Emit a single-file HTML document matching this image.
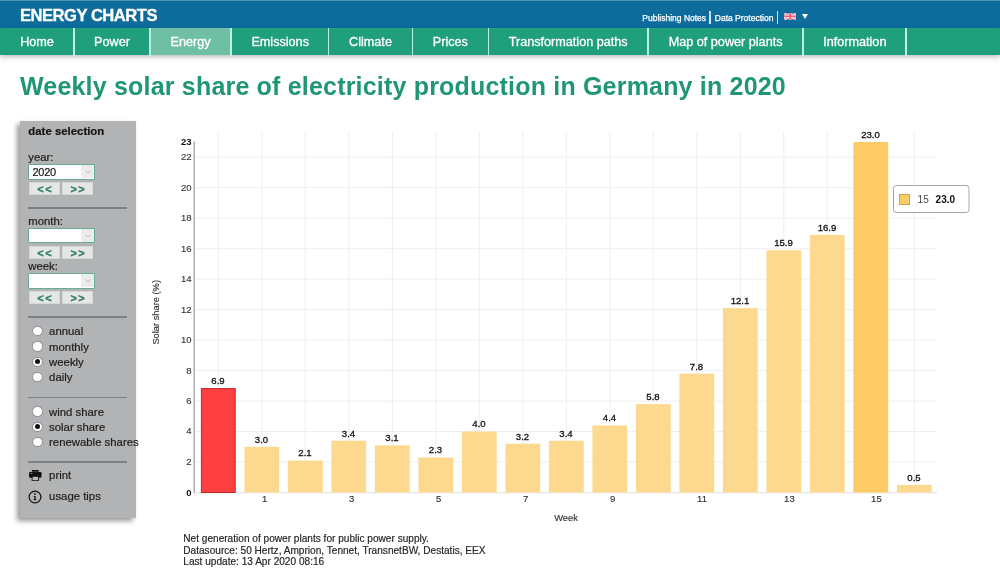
<!DOCTYPE html>
<html><head><meta charset="utf-8"><title>Energy Charts</title>
<style>
html,body{margin:0;padding:0;background:#fff;}
body{width:1000px;height:568px;position:relative;overflow:hidden;font-family:"Liberation Sans",Arial,sans-serif;color:#222;}
#wrap{position:absolute;left:0;top:0;width:1000px;height:568px;will-change:transform}
#top{position:absolute;left:0;top:0;width:1000px;height:28px;background:#0e6c9d;border-top:1px solid #4f95ba;box-sizing:border-box}
#logo{position:absolute;left:20px;top:4.6px;font-weight:bold;font-size:16.6px;color:#fff;-webkit-text-stroke:0.3px #fff;letter-spacing:-0.5px;line-height:20px;white-space:nowrap}
.lk{position:absolute;top:11.5px;font-size:8.5px;color:#fff;line-height:12px;white-space:nowrap;-webkit-text-stroke:0.25px #fff}
.ls{position:absolute;top:10.6px;width:1.5px;height:13.2px;background:#cbe2ee}
#nav{position:absolute;left:0;top:27.7px;width:1000px;height:27px;background:#1f9f7c;box-shadow:0 2px 5px rgba(0,0,0,0.27)}
.ni{position:absolute;top:0;width:200px;height:27px;line-height:29.3px;text-align:center;color:#fff;font-size:12.65px;white-space:nowrap;-webkit-text-stroke:0.3px #fff}
.act{position:absolute;top:0;height:27px;background:#6fbfa6}
.sep{position:absolute;top:0;width:1.5px;height:28px;background:#b8f3df}
h1{position:absolute;left:20px;top:70.5px;margin:0;font-size:25px;letter-spacing:0.19px;line-height:30px;font-weight:bold;color:#1f9775;white-space:nowrap}
#side{position:absolute;left:20px;top:120.5px;width:116px;height:397px;background:#b1b3b5;box-shadow:-3px 3px 5px rgba(0,0,0,0.4);font-size:11.35px;color:#1c1c1c;-webkit-text-stroke:0.2px #1c1c1c}
#side div,#side span{position:absolute;white-space:nowrap}
.hr{left:8px;width:99px;height:1.5px;background:#7e8083}
.sel{left:8.3px;width:67.2px;height:15.7px;background:#fff;border:1px solid #68ad97;border-radius:1px;box-sizing:border-box;font-size:11px;letter-spacing:-0.35px;line-height:14px;padding-left:3.3px;color:#111}
.dd{right:0;top:0;width:13.2px;height:13.2px;background:#ececec}
.btn{width:31px;height:13px;background:#e5e6e6;border:1px solid #d6d7d7;box-sizing:border-box;color:#2a9a79;font-size:11px;font-weight:bold;line-height:12.6px;text-align:center;letter-spacing:1.4px;text-indent:1.4px}
.rd{left:12.2px;width:10.4px;height:10.4px;border:1px solid #8b8d90;border-radius:50%;background:#fff;box-sizing:border-box}
.rd.on:after{content:"";position:absolute;left:1.7px;top:1.7px;width:5px;height:5px;border-radius:50%;background:#111}
.lb{left:29.1px;line-height:14px}
.lb.l0{left:8.3px;margin-top:-0.6px}
svg text{font-family:"Liberation Sans",Arial,sans-serif}
.g{stroke:#eee;stroke-width:1}
.v{font-size:9.6px;fill:#111;text-anchor:middle;stroke:#111;stroke-width:0.3}
.yl{font-size:9.5px;fill:#3a3a3a;text-anchor:end;stroke:#3a3a3a;stroke-width:0.15}
.xl{font-size:9.5px;fill:#333;text-anchor:middle;stroke:#333;stroke-width:0.15}
.tt{font-size:10px;fill:#444}
.b{font-weight:bold;fill:#111;stroke:none}
.ft{position:absolute;left:183.3px;font-size:10.1px;line-height:12px;color:#262626;white-space:nowrap;-webkit-text-stroke:0.18px #262626}
</style></head><body><div id="wrap">
<div id="top"><div id="logo">ENERGY CHARTS</div></div>
<div class="lk" style="left:642.3px">Publishing Notes</div><div class="ls" style="left:709px"></div>
<div class="lk" style="left:714.8px">Data Protection</div><div class="ls" style="left:776.5px"></div>
<svg style="position:absolute;left:784px;top:13.3px" width="12.2" height="6.8" viewBox="0 0 12.2 6.8"><rect width="12.2" height="6.8" fill="#3d4f8c"/><path d="M0 0L12.2 6.8M12.2 0L0 6.8" stroke="#f3e6ea" stroke-width="2.3"/><path d="M0 0L12.2 6.8M12.2 0L0 6.8" stroke="#ef8496" stroke-width="0.8"/><path d="M6.1 0V6.8M0 3.4H12.2" stroke="#f7eef0" stroke-width="3"/><path d="M6.1 0V6.8M0 3.4H12.2" stroke="#f0607a" stroke-width="1.7"/></svg>
<div style="position:absolute;left:802.3px;top:14.4px;width:0;height:0;border-left:3px solid transparent;border-right:3px solid transparent;border-top:5.2px solid #fff"></div>
<div id="nav"><div class="act" style="left:150.5px;width:80.5px"></div><div class="ni" style="left:-63.0px">Home</div><div class="ni" style="left:12.0px">Power</div><div class="ni" style="left:90.5px">Energy</div><div class="ni" style="left:180.2px">Emissions</div><div class="ni" style="left:270.5px">Climate</div><div class="ni" style="left:350.3px">Prices</div><div class="ni" style="left:468.2px">Transformation paths</div><div class="ni" style="left:625.6px">Map of power plants</div><div class="ni" style="left:754.8px">Information</div><div class="sep" style="left:73.25px"></div><div class="sep" style="left:149.25px"></div><div class="sep" style="left:230.25px"></div><div class="sep" style="left:327.95px"></div><div class="sep" style="left:411.95px"></div><div class="sep" style="left:487.85px"></div><div class="sep" style="left:647.25px"></div><div class="sep" style="left:802.15px"></div><div class="sep" style="left:905.45px"></div></div>
<h1>Weekly solar share of electricity production in Germany in 2020</h1>
<div id="side">
<div style="left:8.3px;top:3px;font-weight:bold;color:#111;font-size:11.4px;line-height:14px">date selection</div><div class="lb l0" style="top:29.9px">year:</div><div class="sel" style="top:43.5px">2020<span class="dd"></span><svg width="6" height="3.8" viewBox="0 0 6 3.8" style="position:absolute;right:3.4px;top:5.2px"><path d="M0.4 0.4L3 3.2L5.6 0.4" fill="none" stroke="#b9b9b9" stroke-width="1"/></svg></div><div class="btn" style="left:9px;top:61.5px">&lt;&lt;</div><div class="btn" style="left:42.2px;top:61.5px">&gt;&gt;</div><div class="hr" style="top:86.6px"></div><div class="lb l0" style="top:93.8px">month:</div><div class="sel" style="top:107.0px"><span class="dd"></span><svg width="6" height="3.8" viewBox="0 0 6 3.8" style="position:absolute;right:3.4px;top:5.2px"><path d="M0.4 0.4L3 3.2L5.6 0.4" fill="none" stroke="#b9b9b9" stroke-width="1"/></svg></div><div class="btn" style="left:9px;top:125.0px">&lt;&lt;</div><div class="btn" style="left:42.2px;top:125.0px">&gt;&gt;</div><div class="lb l0" style="top:138.8px">week:</div><div class="sel" style="top:152.4px"><span class="dd"></span><svg width="6" height="3.8" viewBox="0 0 6 3.8" style="position:absolute;right:3.4px;top:5.2px"><path d="M0.4 0.4L3 3.2L5.6 0.4" fill="none" stroke="#b9b9b9" stroke-width="1"/></svg></div><div class="btn" style="left:9px;top:170.0px">&lt;&lt;</div><div class="btn" style="left:42.2px;top:170.0px">&gt;&gt;</div><div class="hr" style="top:195.5px"></div><div class="rd" style="top:205.4px"></div><div class="lb" style="top:203.8px">annual</div><div class="rd" style="top:220.8px"></div><div class="lb" style="top:219.4px">monthly</div><div class="rd on" style="top:236.1px"></div><div class="lb" style="top:234.5px">weekly</div><div class="rd" style="top:251.3px"></div><div class="lb" style="top:249.8px">daily</div><div class="hr" style="top:276.1px"></div><div class="rd" style="top:285.7px"></div><div class="lb" style="top:284.1px">wind share</div><div class="rd on" style="top:301.1px"></div><div class="lb" style="top:299.5px">solar share</div><div class="rd" style="top:316.3px"></div><div class="lb" style="top:314.7px">renewable shares</div><div class="hr" style="top:340.7px"></div><div class="lb" style="top:347.4px">print</div><div class="lb" style="top:368.0px">usage tips</div>
<svg style="position:absolute;left:9.1px;top:349.3px" width="12.6" height="11.2" viewBox="0 0 12.6 11.2"><rect x="2.8" y="0" width="7" height="1.7" rx="0.4" fill="#111"/><rect x="0" y="2.1" width="12.6" height="5.6" rx="1.1" fill="#111"/><rect x="3.1" y="6.3" width="6.4" height="4.4" fill="#b9bbbd" stroke="#111" stroke-width="0.9"/><rect x="1.2" y="3.2" width="2.2" height="0.8" fill="#9a9c9e"/></svg>
<svg style="position:absolute;left:8.4px;top:369.1px" width="14" height="14" viewBox="0 0 14 14"><circle cx="7" cy="7" r="5.9" fill="none" stroke="#111" stroke-width="1.2"/><rect x="6.35" y="6.1" width="1.3" height="3.9" fill="#111"/><rect x="5.7" y="6.1" width="1.5" height="0.9" fill="#111"/><rect x="5.6" y="9.3" width="2.8" height="0.9" fill="#111"/><circle cx="7" cy="4.2" r="0.85" fill="#111"/></svg>
</div>
<svg style="position:absolute;left:0;top:0" width="1000" height="568" viewBox="0 0 1000 568">
<line x1="195.2" y1="462.0" x2="937.5" y2="462.0" class="g"/>
<line x1="195.2" y1="431.5" x2="937.5" y2="431.5" class="g"/>
<line x1="195.2" y1="401.1" x2="937.5" y2="401.1" class="g"/>
<line x1="195.2" y1="370.6" x2="937.5" y2="370.6" class="g"/>
<line x1="195.2" y1="340.1" x2="937.5" y2="340.1" class="g"/>
<line x1="195.2" y1="309.6" x2="937.5" y2="309.6" class="g"/>
<line x1="195.2" y1="279.1" x2="937.5" y2="279.1" class="g"/>
<line x1="195.2" y1="248.7" x2="937.5" y2="248.7" class="g"/>
<line x1="195.2" y1="218.2" x2="937.5" y2="218.2" class="g"/>
<line x1="195.2" y1="187.7" x2="937.5" y2="187.7" class="g"/>
<line x1="195.2" y1="157.2" x2="937.5" y2="157.2" class="g"/>
<line x1="218.3" y1="131.6" x2="218.3" y2="492.5" class="g"/>
<line x1="261.8" y1="131.6" x2="261.8" y2="492.5" class="g"/>
<line x1="305.3" y1="131.6" x2="305.3" y2="492.5" class="g"/>
<line x1="348.8" y1="131.6" x2="348.8" y2="492.5" class="g"/>
<line x1="392.3" y1="131.6" x2="392.3" y2="492.5" class="g"/>
<line x1="435.8" y1="131.6" x2="435.8" y2="492.5" class="g"/>
<line x1="479.3" y1="131.6" x2="479.3" y2="492.5" class="g"/>
<line x1="522.8" y1="131.6" x2="522.8" y2="492.5" class="g"/>
<line x1="566.3" y1="131.6" x2="566.3" y2="492.5" class="g"/>
<line x1="609.8" y1="131.6" x2="609.8" y2="492.5" class="g"/>
<line x1="653.3" y1="131.6" x2="653.3" y2="492.5" class="g"/>
<line x1="696.8" y1="131.6" x2="696.8" y2="492.5" class="g"/>
<line x1="740.3" y1="131.6" x2="740.3" y2="492.5" class="g"/>
<line x1="783.8" y1="131.6" x2="783.8" y2="492.5" class="g"/>
<line x1="827.3" y1="131.6" x2="827.3" y2="492.5" class="g"/>
<line x1="870.8" y1="131.6" x2="870.8" y2="492.5" class="g"/>
<line x1="914.3" y1="131.6" x2="914.3" y2="492.5" class="g"/>
<line x1="195.2" y1="492.8" x2="937.5" y2="492.8" stroke="#e2e2e2" stroke-width="1"/>
<rect x="201.4" y="388.6" width="33.8" height="103.9" fill="#fe4041" stroke="#c3262a" stroke-width="1"/>
<text x="218.0" y="384.0" class="v">6.9</text>
<rect x="244.4" y="446.8" width="34.8" height="45.7" fill="#fdd990"/>
<text x="261.5" y="442.7" class="v">3.0</text>
<rect x="287.9" y="460.5" width="34.8" height="32.0" fill="#fdd990"/>
<text x="305.0" y="456.4" class="v">2.1</text>
<rect x="331.4" y="440.7" width="34.8" height="51.8" fill="#fdd990"/>
<text x="348.5" y="436.6" class="v">3.4</text>
<rect x="374.9" y="445.3" width="34.8" height="47.2" fill="#fdd990"/>
<text x="392.0" y="441.2" class="v">3.1</text>
<rect x="418.4" y="457.4" width="34.8" height="35.1" fill="#fdd990"/>
<text x="435.5" y="453.3" class="v">2.3</text>
<rect x="461.9" y="431.5" width="34.8" height="61.0" fill="#fdd990"/>
<text x="479.0" y="427.4" class="v">4.0</text>
<rect x="505.4" y="443.7" width="34.8" height="48.8" fill="#fdd990"/>
<text x="522.5" y="439.6" class="v">3.2</text>
<rect x="548.9" y="440.7" width="34.8" height="51.8" fill="#fdd990"/>
<text x="566.0" y="436.6" class="v">3.4</text>
<rect x="592.4" y="425.4" width="34.8" height="67.1" fill="#fdd990"/>
<text x="609.5" y="421.3" class="v">4.4</text>
<rect x="635.9" y="404.1" width="34.8" height="88.4" fill="#fdd990"/>
<text x="653.0" y="400.0" class="v">5.8</text>
<rect x="679.4" y="373.6" width="34.8" height="118.9" fill="#fdd990"/>
<text x="696.5" y="369.5" class="v">7.8</text>
<rect x="722.9" y="308.1" width="34.8" height="184.4" fill="#fdd990"/>
<text x="740.0" y="304.0" class="v">12.1</text>
<rect x="766.4" y="250.2" width="34.8" height="242.3" fill="#fdd990"/>
<text x="783.5" y="246.1" class="v">15.9</text>
<rect x="809.9" y="234.9" width="34.8" height="257.6" fill="#fdd990"/>
<text x="827.0" y="230.8" class="v">16.9</text>
<rect x="853.4" y="142.0" width="34.8" height="350.5" fill="#fdcb66"/>
<text x="870.5" y="137.9" class="v">23.0</text>
<rect x="896.9" y="484.9" width="34.8" height="7.6" fill="#fdd990"/>
<text x="914.0" y="480.8" class="v">0.5</text>
<line x1="194.2" y1="141.5" x2="194.2" y2="493.0" stroke="#a8a8a8" stroke-width="1.4"/>
<text x="191.6" y="496.1" class="yl b">0</text>
<text x="191.6" y="464.9" class="yl">2</text>
<text x="191.6" y="434.4" class="yl">4</text>
<text x="191.6" y="404.0" class="yl">6</text>
<text x="191.6" y="373.5" class="yl">8</text>
<text x="191.6" y="343.0" class="yl">10</text>
<text x="191.6" y="312.5" class="yl">12</text>
<text x="191.6" y="282.0" class="yl">14</text>
<text x="191.6" y="251.6" class="yl">16</text>
<text x="191.6" y="221.1" class="yl">18</text>
<text x="191.6" y="190.6" class="yl">20</text>
<text x="191.6" y="160.1" class="yl">22</text>
<text x="191.6" y="145.2" class="yl b">23</text>
<text x="262.1" y="501.8" class="xl" style="text-anchor:start">1</text>
<text x="349.1" y="501.8" class="xl" style="text-anchor:start">3</text>
<text x="436.1" y="501.8" class="xl" style="text-anchor:start">5</text>
<text x="523.1" y="501.8" class="xl" style="text-anchor:start">7</text>
<text x="610.1" y="501.8" class="xl" style="text-anchor:start">9</text>
<text x="697.1" y="501.8" class="xl" style="text-anchor:start">11</text>
<text x="784.1" y="501.8" class="xl" style="text-anchor:start">13</text>
<text x="871.1" y="501.8" class="xl" style="text-anchor:start">15</text>
<text x="566" y="521.2" class="xl" style="font-size:9.3px">Week</text>
<text transform="translate(158.8,312.3) rotate(-90)" class="xl" style="font-size:9.3px">Solar share (%)</text>
<rect x="893.5" y="185.5" width="75.5" height="27" rx="3" fill="#fff" stroke="#a5a5a5" stroke-width="1"/>
<rect x="899.5" y="194.5" width="10" height="10" fill="#fdcb66" stroke="#caa555" stroke-width="1"/>
<text x="917.6" y="203" class="tt">15</text>
<text x="935.6" y="203" class="tt b">23.0</text>
</svg>
<div class="ft" style="top:532.9px">Net generation of power plants for public power supply.</div>
<div class="ft" style="top:544.5px">Datasource: 50 Hertz, Amprion, Tennet, TransnetBW, Destatis, EEX</div>
<div class="ft" style="top:556.2px">Last update: 13 Apr 2020 08:16</div>
</div></body></html>
